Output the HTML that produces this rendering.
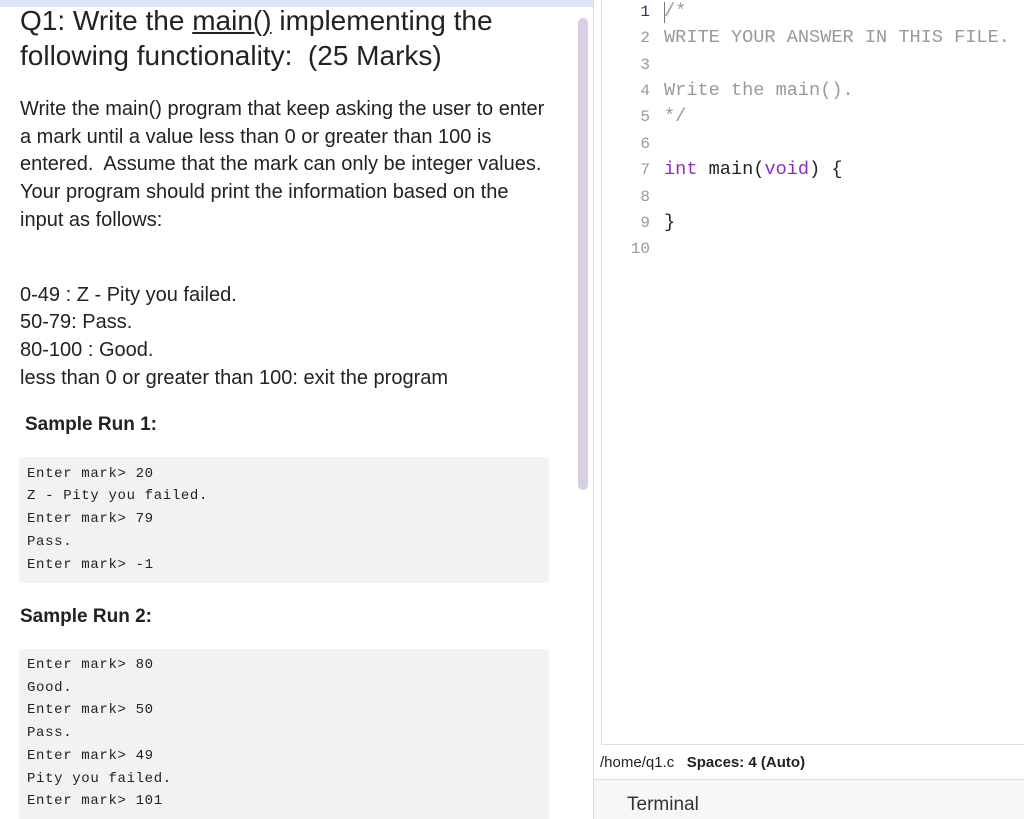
<!DOCTYPE html>
<html><head><meta charset="utf-8"><style>
html,body{margin:0;width:1024px;height:819px;overflow:hidden}
body{background:#fff;position:relative;font-family:"Liberation Sans",sans-serif;color:#222}
.a{position:absolute;white-space:pre}
.h{font-size:28px;color:#222;left:20px}
.p{font-size:20px;left:20px;color:#222}
.box{position:absolute;left:19px;width:530px;background:#f2f2f2;border-radius:3px}
.m{font-family:"Liberation Mono",monospace;font-size:14px;letter-spacing:0.65px;color:#222;left:27px}
.ln{font-family:"Liberation Mono",monospace;font-size:16px;color:#999;width:30px;left:620px;text-align:right}
.c{font-family:"Liberation Mono",monospace;font-size:18.6px;color:#999;left:664px}
</style></head><body>
<div style="position:absolute;left:0;top:0;width:593px;height:7px;background:#dde6f8"></div>
<div style="position:absolute;left:578px;top:18px;width:10px;height:472px;background:#d8cfe3;border-radius:5px"></div>
<div style="position:absolute;left:593px;top:0;width:1px;height:819px;background:#ddd"></div>
<div style="position:absolute;left:601px;top:0;width:1px;height:745px;background:#ddd"></div>
<div style="position:absolute;left:601px;top:744px;width:423px;height:1px;background:#ddd"></div>
<div style="position:absolute;left:594px;top:779px;width:430px;height:1px;background:#ddd"></div>
<div style="position:absolute;left:594px;top:780px;width:430px;height:39px;background:#f7f7f7"></div>

<div class="a h" style="top:5px">Q1: Write the <span style="text-decoration:underline">main()</span> implementing the</div>
<div class="a h" style="top:40px">following functionality:  (25 Marks)</div>
<div class="a p" style="top:98px">Write the main() program that keep asking the user to enter</div>
<div class="a p" style="top:126px">a mark until a value less than 0 or greater than 100 is</div>
<div class="a p" style="top:153px">entered.  Assume that the mark can only be integer values.</div>
<div class="a p" style="top:181px">Your program should print the information based on the</div>
<div class="a p" style="top:209px">input as follows:</div>
<div class="a p" style="top:284px">0-49 : Z - Pity you failed.</div>
<div class="a p" style="top:311px">50-79: Pass.</div>
<div class="a p" style="top:339px">80-100 : Good.</div>
<div class="a p" style="top:367px">less than 0 or greater than 100: exit the program</div>
<div class="a" style="top:414px;left:25px;font-size:19px;font-weight:bold">Sample Run 1:</div>
<div class="box" style="top:457px;height:126px"></div>
<div class="a m" style="top:466px">Enter mark> 20</div>
<div class="a m" style="top:488px">Z - Pity you failed.</div>
<div class="a m" style="top:511px">Enter mark> 79</div>
<div class="a m" style="top:534px">Pass.</div>
<div class="a m" style="top:557px">Enter mark> -1</div>
<div class="a" style="top:606px;left:20px;font-size:19px;font-weight:bold">Sample Run 2:</div>
<div class="box" style="top:649px;height:170px;border-radius:3px 3px 0 0"></div>
<div class="a m" style="top:657px">Enter mark> 80</div>
<div class="a m" style="top:680px">Good.</div>
<div class="a m" style="top:702px">Enter mark> 50</div>
<div class="a m" style="top:725px">Pass.</div>
<div class="a m" style="top:748px">Enter mark> 49</div>
<div class="a m" style="top:771px">Pity you failed.</div>
<div class="a m" style="top:793px">Enter mark> 101</div>

<div class="a ln" style="top:3px;color:#223377">1</div>
<div class="a ln" style="top:29px">2</div>
<div class="a ln" style="top:56px">3</div>
<div class="a ln" style="top:82px">4</div>
<div class="a ln" style="top:108px">5</div>
<div class="a ln" style="top:135px">6</div>
<div class="a ln" style="top:161px">7</div>
<div class="a ln" style="top:188px">8</div>
<div class="a ln" style="top:214px">9</div>
<div class="a ln" style="top:240px">10</div>
<div style="position:absolute;left:664px;top:2px;width:1px;height:21px;background:#777"></div>
<div class="a c" style="top:1px">/*</div>
<div class="a c" style="top:27px">WRITE YOUR ANSWER IN THIS FILE.</div>
<div class="a c" style="top:80px">Write the main().</div>
<div class="a c" style="top:106px">*/</div>
<div class="a c" style="top:159px;color:#222"><span style="color:#8a2fc4">int</span> main(<span style="color:#8a2fc4">void</span>) {</div>
<div class="a c" style="top:212px;color:#222">}</div>

<div class="a" style="top:754px;left:600px;font-size:15px">/home/q1.c   <b>Spaces: 4 (Auto)</b></div>
<div class="a" style="top:794px;left:627px;font-size:19px;color:#333">Terminal</div>
</body></html>
